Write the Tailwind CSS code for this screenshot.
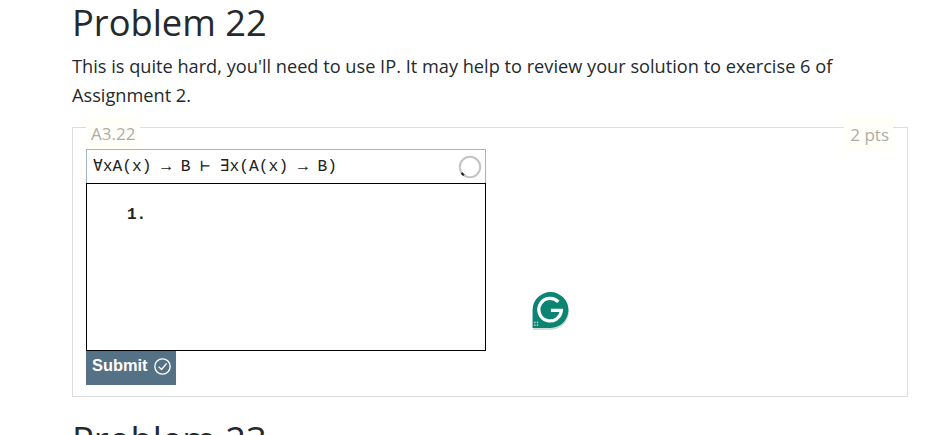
<!DOCTYPE html>
<html lang="en">
<head>
    <meta charset="UTF-8">
    <meta name="viewport" content="width=device-width, initial-scale=1.0">
    <title>Problem 22</title>
    <script src="https://cdn.jsdelivr.net/npm/@tailwindcss/browser@4"></script>
</head>
<body class="bg-white h-[435px] overflow-hidden font-['Open_Sans',sans-serif] text-[#24292e]">
    <div class="relative pl-[72px] pr-[29px] h-[435px] overflow-hidden">
        <h1 class="text-[36.3px] leading-[44px] h-[44px] font-normal">Problem 22</h1>
        <p class="text-[18.2px] leading-[29px] mt-[8px] pr-[60px]">This is quite hard, you'll need to use IP. It may help to review your solution to exercise 6 of Assignment 2.</p>

        <section class="relative mt-[17px] h-[270px] border border-[#dddddd] pl-[13px] pt-[21px]">
            <span class="absolute left-[13px] -top-[13px] h-[37px] px-[5px] pt-[7px] bg-[#fffef8] text-[#adadA8] text-[17px] leading-[24px]">A3.22</span>
            <span class="absolute right-[14px] -top-[13px] h-[37px] pl-[6px] pr-[4px] pt-[8px] bg-[#fffef8] text-[#adadA8] text-[17px] leading-[24px]">2 pts</span>

            <div class="relative w-[400px] h-[34px] border border-[#a5b4c2] border-b-0 flex items-center justify-between pl-[6px] pr-[3px] font-['Liberation_Mono',monospace] text-[16.25px] text-[#222222]">
                <span class="whitespace-pre pt-[1px]">∀xA(x) → B ⊢ ∃x(A(x) → B)</span>
                <svg class="w-[24px] h-[24px]" viewBox="0 0 24 24" fill="none">
                    <circle cx="12" cy="12" r="10.2" stroke="#c4c4c4" stroke-width="2"/>
                    <path d="M3.6 17.8 A10.2 10.2 0 0 0 6 20.2" stroke="#222222" stroke-width="2.2"/>
                </svg>
            </div>
            <div class="w-[400px] h-[168px] border border-black pl-[40px] pt-[22px] font-['Liberation_Mono',monospace] font-bold text-[16px] leading-[18px] text-[#222222]">1.</div>
            <button class="flex items-center gap-[6px] w-[90px] h-[34px] pl-[6px] pb-[5px] bg-[#557185] text-white font-['Liberation_Sans',sans-serif] font-bold text-[16.4px]">
                Submit
                <svg class="w-[17px] h-[17px] mt-[1px]" viewBox="0 0 16 16" fill="none" stroke="white" stroke-width="1.3">
                    <circle cx="8" cy="8" r="7.2"/>
                    <path d="M4.4 8.2 7.2 10.8 11.8 5"/>
                </svg>
            </button>

            <svg class="absolute left-[457px] top-[163px] w-[41px] h-[41px]" viewBox="0 0 40 40">
                <path d="M20 2 A18 18 0 1 1 20 38 H3 V20 A18 18 0 0 1 20 2 Z" fill="#d5dbd9"/>
                <path d="M20 1 A17.5 17.5 0 1 1 20 36 H2.5 V18.5 A17.5 17.5 0 0 1 20 1 Z" fill="#0b8572"/>
                <path d="M27.6 10.6 A11 11 0 1 0 30.6 19 H20.4" fill="none" stroke="white" stroke-width="3.2"/>
                <g fill="#b9ddd6">
                    <rect x="4" y="30" width="1.4" height="1.4"/><rect x="6.6" y="30" width="1.4" height="1.4"/>
                    <rect x="4" y="32.6" width="1.4" height="1.4"/><rect x="6.6" y="32.6" width="1.4" height="1.4"/>
                </g>
            </svg>
        </section>

        <h1 class="text-[36.3px] leading-[44px] font-normal mt-[20px]">Problem 23</h1>
    </div>
</body>
</html>
